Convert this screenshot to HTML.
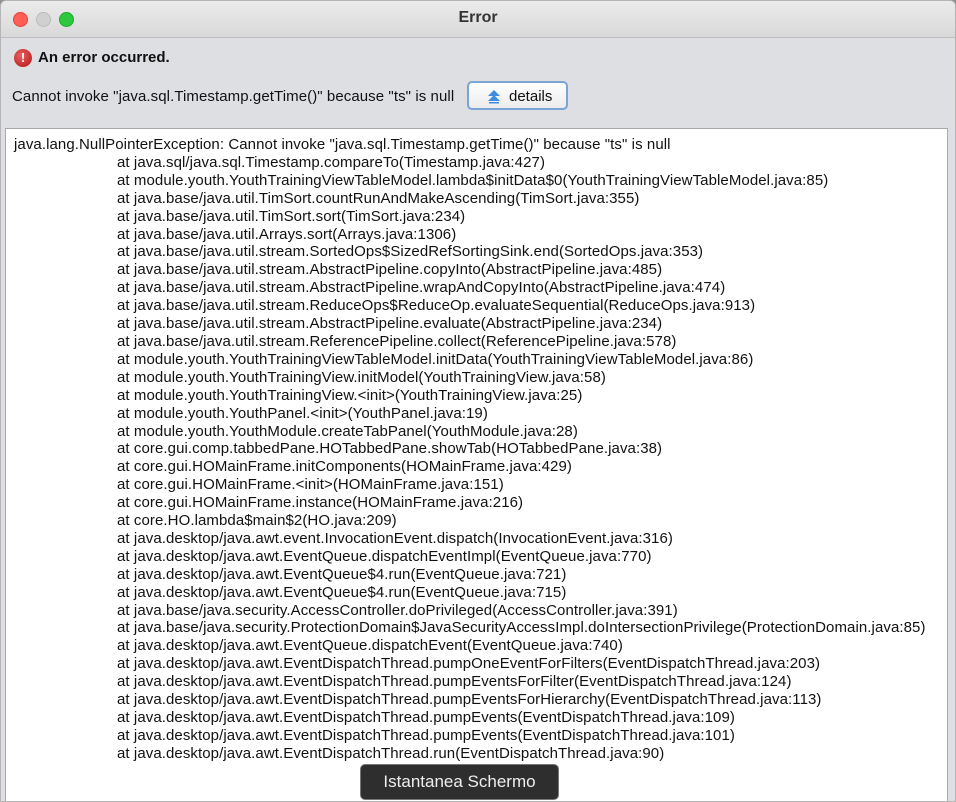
<!DOCTYPE html>
<html><head><style>
body{margin:0;width:956px;height:800px;background:#8e918e;font-family:"Liberation Sans",Arial,sans-serif;overflow:hidden;position:relative}
.win{position:absolute;left:0;top:0;width:954px;height:800px;background:#dedfe3;border:1px solid #b5b5b5;border-radius:6px 6px 0 0;overflow:hidden}
.tb{height:36px;background:linear-gradient(#ebebeb,#d9d9d9);border-bottom:1px solid #bdbdbd;position:relative}
.tb .t{position:absolute;left:0;right:0;top:8px;text-align:center;font-weight:bold;font-size:16px;color:#333}
.dot{position:absolute;top:11px;width:13px;height:13px;border-radius:50%}
.hd{position:absolute;left:37px;top:48px;font-weight:bold;font-size:15px;color:#111}
.ic{position:absolute;left:13px;top:48px;width:18px;height:18px;border-radius:50%;background:radial-gradient(circle at 40% 35%,#e86060,#b31414);color:#fff;font-weight:bold;font-size:13px;text-align:center;line-height:18px}
.msg{position:absolute;left:11px;top:87px;font-size:15px;letter-spacing:0.08px;color:#111}
.btn{position:absolute;left:466px;top:80px;width:101px;height:29px;box-sizing:border-box;border:2px solid #7aa3d6;border-radius:5px;background:linear-gradient(#fff,#ececec);font-size:15px;color:#111}
.btn span{position:absolute;left:40px;top:5px}
.ta{position:absolute;left:4px;top:127px;width:943px;height:680px;background:#fff;border:1px solid #aaa;font-size:15px;letter-spacing:0.08px;color:#111;line-height:17.9px;padding-top:7px;box-sizing:border-box}
.ta div{white-space:nowrap;padding-left:111px}
.ta div.f{padding-left:8px}
.tip{position:absolute;left:359px;top:763px;width:199px;height:36px;box-sizing:border-box;background:#2e2e2e;border:1px solid #777;border-radius:5px;color:#eee;font-size:17px;text-align:center;line-height:34px}
</style></head><body>
<div class="win">
<div class="tb"><div class="dot" style="left:12px;background:#fd5f57;border:1px solid #e0443e"></div><div class="dot" style="left:35px;background:#d0d0d0;border:1px solid #bbb"></div><div class="dot" style="left:58px;background:#2cc840;border:1px solid #1aab29"></div><div class="t">Error</div></div>
<div class="ic">!</div><div class="hd">An error occurred.</div>
<div class="msg">Cannot invoke "java.sql.Timestamp.getTime()" because "ts" is null</div>
<div class="btn"><svg style="position:absolute;left:17px;top:5px" width="16" height="16" viewBox="0 0 16 16"><path d="M8 2L14 8H2Z" fill="#3c8de0"/><path d="M8 7L14 13H2Z" fill="#3c8de0"/><rect x="3" y="14" width="10" height="1.5" fill="#3c8de0"/></svg><span>details</span></div>
<div class="ta">
<div class="f">java.lang.NullPointerException: Cannot invoke "java.sql.Timestamp.getTime()" because "ts" is null</div>
<div>at java.sql/java.sql.Timestamp.compareTo(Timestamp.java:427)</div>
<div>at module.youth.YouthTrainingViewTableModel.lambda$initData$0(YouthTrainingViewTableModel.java:85)</div>
<div>at java.base/java.util.TimSort.countRunAndMakeAscending(TimSort.java:355)</div>
<div>at java.base/java.util.TimSort.sort(TimSort.java:234)</div>
<div>at java.base/java.util.Arrays.sort(Arrays.java:1306)</div>
<div>at java.base/java.util.stream.SortedOps$SizedRefSortingSink.end(SortedOps.java:353)</div>
<div>at java.base/java.util.stream.AbstractPipeline.copyInto(AbstractPipeline.java:485)</div>
<div>at java.base/java.util.stream.AbstractPipeline.wrapAndCopyInto(AbstractPipeline.java:474)</div>
<div>at java.base/java.util.stream.ReduceOps$ReduceOp.evaluateSequential(ReduceOps.java:913)</div>
<div>at java.base/java.util.stream.AbstractPipeline.evaluate(AbstractPipeline.java:234)</div>
<div>at java.base/java.util.stream.ReferencePipeline.collect(ReferencePipeline.java:578)</div>
<div>at module.youth.YouthTrainingViewTableModel.initData(YouthTrainingViewTableModel.java:86)</div>
<div>at module.youth.YouthTrainingView.initModel(YouthTrainingView.java:58)</div>
<div>at module.youth.YouthTrainingView.&lt;init&gt;(YouthTrainingView.java:25)</div>
<div>at module.youth.YouthPanel.&lt;init&gt;(YouthPanel.java:19)</div>
<div>at module.youth.YouthModule.createTabPanel(YouthModule.java:28)</div>
<div>at core.gui.comp.tabbedPane.HOTabbedPane.showTab(HOTabbedPane.java:38)</div>
<div>at core.gui.HOMainFrame.initComponents(HOMainFrame.java:429)</div>
<div>at core.gui.HOMainFrame.&lt;init&gt;(HOMainFrame.java:151)</div>
<div>at core.gui.HOMainFrame.instance(HOMainFrame.java:216)</div>
<div>at core.HO.lambda$main$2(HO.java:209)</div>
<div>at java.desktop/java.awt.event.InvocationEvent.dispatch(InvocationEvent.java:316)</div>
<div>at java.desktop/java.awt.EventQueue.dispatchEventImpl(EventQueue.java:770)</div>
<div>at java.desktop/java.awt.EventQueue$4.run(EventQueue.java:721)</div>
<div>at java.desktop/java.awt.EventQueue$4.run(EventQueue.java:715)</div>
<div>at java.base/java.security.AccessController.doPrivileged(AccessController.java:391)</div>
<div>at java.base/java.security.ProtectionDomain$JavaSecurityAccessImpl.doIntersectionPrivilege(ProtectionDomain.java:85)</div>
<div>at java.desktop/java.awt.EventQueue.dispatchEvent(EventQueue.java:740)</div>
<div>at java.desktop/java.awt.EventDispatchThread.pumpOneEventForFilters(EventDispatchThread.java:203)</div>
<div>at java.desktop/java.awt.EventDispatchThread.pumpEventsForFilter(EventDispatchThread.java:124)</div>
<div>at java.desktop/java.awt.EventDispatchThread.pumpEventsForHierarchy(EventDispatchThread.java:113)</div>
<div>at java.desktop/java.awt.EventDispatchThread.pumpEvents(EventDispatchThread.java:109)</div>
<div>at java.desktop/java.awt.EventDispatchThread.pumpEvents(EventDispatchThread.java:101)</div>
<div>at java.desktop/java.awt.EventDispatchThread.run(EventDispatchThread.java:90)</div>
</div>
<div class="tip">Istantanea Schermo</div>
</div>
</body></html>
